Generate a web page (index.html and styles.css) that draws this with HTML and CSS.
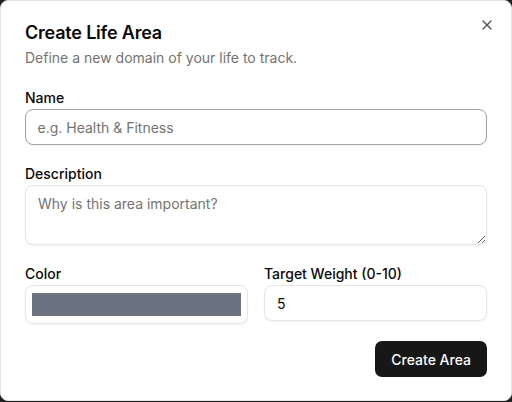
FILE: index.html
```html
<!DOCTYPE html>
<html lang="en">

<head>
    <meta charset="UTF-8">
    <meta name="viewport" content="width=device-width, initial-scale=1.0">
    <title>Create Life Area</title>
    <link rel="stylesheet" href="styles.css">
</head>

<body>
    <div class="dialog">
        <button class="close" type="button" aria-label="Close">
            <svg width="16" height="16" viewBox="0 0 24 24" fill="none" stroke="currentColor" stroke-width="2"
                stroke-linecap="round" stroke-linejoin="round">
                <path d="M18 6 6 18" />
                <path d="m6 6 12 12" />
            </svg>
        </button>

        <!-- Header -->
        <div class="dialog-header">
            <h2>Create Life Area</h2>
            <p>Define a new domain of your life to track.</p>
        </div>

        <!-- Area Form -->
        <form id="area-form">
            <div class="form-group">
                <label for="name">Name</label>
                <input type="text" id="name" name="name" class="focused" placeholder="e.g. Health &amp; Fitness" />
            </div>
            <div class="form-group">
                <label for="description">Description</label>
                <textarea id="description" name="description" placeholder="Why is this area important?"></textarea>
            </div>
            <div class="form-row">
                <div class="form-group">
                    <label for="color">Color</label>
                    <input type="color" id="color" name="color" value="#6b7280" />
                </div>
                <div class="form-group">
                    <label for="weight">Target Weight (0-10)</label>
                    <input type="number" id="weight" name="weight" min="0" max="10" value="5" />
                </div>
            </div>
            <div class="actions">
                <button type="submit" class="primary">Create Area</button>
            </div>
        </form>
    </div>
</body>

</html>
```

FILE: styles.css
```css
* {
    box-sizing: border-box;
}

body {
    font-family: Inter, "Noto Sans", sans-serif;
    background-color: #1f1f1f;
    margin: 0;
    padding: 0;
    color: #0a0a0a;
}

.dialog {
    position: relative;
    width: 512px;
    height: 401px;
    padding: 23px 24px;
    background: white;
    border: 1px solid #e5e5e5;
    border-radius: 8px;
}

.close {
    position: absolute;
    top: 16px;
    right: 16px;
    width: 16px;
    height: 16px;
    padding: 0;
    border: none;
    background: none;
    color: #0a0a0a;
    opacity: 0.7;
    cursor: pointer;
}

.close svg {
    display: block;
}

.dialog-header h2 {
    margin: 0;
    font-size: 18px;
    line-height: 18px;
    font-weight: 600;
    letter-spacing: -0.2px;
}

.dialog-header p {
    margin: 6px 0 0;
    font-size: 14px;
    line-height: 20px;
    color: #737373;
}

#area-form {
    margin-top: 23px;
}

.form-group {
    margin-bottom: 22px;
}

.form-row {
    display: grid;
    grid-template-columns: 1fr 1fr;
    column-gap: 16px;
}

.form-row .form-group {
    margin-bottom: 0;
}

label {
    display: block;
    margin-bottom: 4px;
    font-size: 14px;
    line-height: 14px;
    font-weight: 500;
}

input,
textarea {
    display: block;
    width: 100%;
    height: 36px;
    padding: 0 12px;
    font-family: inherit;
    font-size: 14px;
    color: #0a0a0a;
    background: white;
    border: 1px solid #e5e5e5;
    border-radius: 8px;
    box-shadow: 0 1px 2px rgba(0, 0, 0, 0.05);
    outline: none;
}

input::placeholder,
textarea::placeholder {
    color: #737373;
}

input.focused {
    border: 1.5px solid #a1a1a1;
    padding-left: 11.5px;
}

textarea {
    height: 60px;
    padding: 8px 12px;
    line-height: 20px;
    resize: vertical;
}

input[type="color"] {
    height: 39px;
    padding: 7px 6px;
    cursor: pointer;
}

input[type="color"]::-webkit-color-swatch-wrapper {
    padding: 0;
}

input[type="color"]::-webkit-color-swatch {
    border: none;
    border-radius: 0;
}

input[type="number"]::-webkit-inner-spin-button {
    -webkit-appearance: none;
}

.actions {
    display: flex;
    justify-content: flex-end;
    margin-top: 17px;
}

button.primary {
    height: 36px;
    padding: 0 16px;
    background-color: #171717;
    color: #fafafa;
    border: none;
    border-radius: 7px;
    font-family: inherit;
    font-size: 14px;
    font-weight: 500;
    cursor: pointer;
}

button.primary:hover {
    background-color: #2a2a2a;
}
```
